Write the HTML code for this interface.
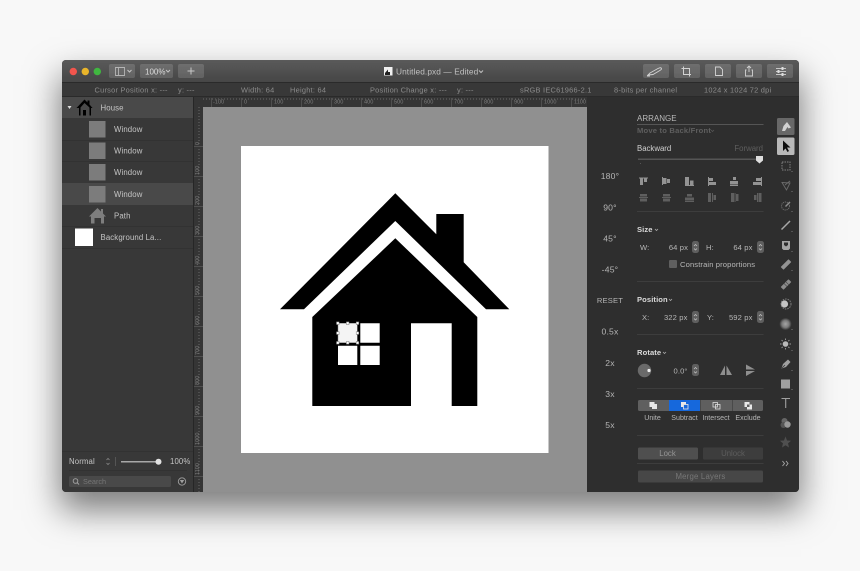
<!DOCTYPE html>
<html lang="en"><head><meta charset="utf-8"><title>Untitled.pxd</title>
<style>
html,body{margin:0;padding:0;width:860px;height:571px;overflow:hidden;background:#f8f8f8}
.shadow{position:absolute;left:68px;top:74px;width:725px;height:418px;box-shadow:0 10px 32px 8px rgba(0,0,0,.5)}
svg{position:absolute;left:0;top:0}
text{font-family:"Liberation Sans",sans-serif}
.s{font-size:7.4px;fill:#8c8c8c;letter-spacing:.25px}
.r{font-size:5.6px;fill:#7c7c7c}
.l{font-size:7.8px;fill:#c4c4c4;letter-spacing:.12px}
.g{font-size:8.6px;fill:#b4b4b4;text-anchor:middle;letter-spacing:.2px}
.b{font-size:7.6px;fill:#dadada;font-weight:bold;letter-spacing:.1px}
.p{font-size:7.6px;fill:#b6b6b6;letter-spacing:.12px}
.u{font-size:7.1px;fill:#b6b6b6;text-anchor:middle}
.e{text-anchor:end}.m{text-anchor:middle}
.ln{stroke:#3d3d3d;stroke-width:1}
.ic{fill:#939393}.id{fill:#5e5e5e}
</style></head><body>
<div class="shadow"></div>
<svg width="860" height="571" viewBox="0 0 860 571" xmlns="http://www.w3.org/2000/svg">
<defs>
<linearGradient id="tb" x1="0" y1="0" x2="0" y2="1"><stop offset="0" stop-color="#5a5a5a"/><stop offset="1" stop-color="#464646"/></linearGradient>
<linearGradient id="btn" x1="0" y1="0" x2="0" y2="1"><stop offset="0" stop-color="#6e6e6e"/><stop offset="1" stop-color="#626262"/></linearGradient>
<radialGradient id="soft"><stop offset="0" stop-color="#a5a5a5"/><stop offset=".6" stop-color="#7a7a7a"/><stop offset="1" stop-color="#333"/></radialGradient>
<pattern id="tickh" x="2" y="0" width="3" height="10" patternUnits="userSpaceOnUse"><rect x="0" y="8" width="1" height="2" fill="#505050"/></pattern>
<pattern id="tickv" x="0" y="2" width="10" height="3" patternUnits="userSpaceOnUse"><rect x="8" y="0" width="2" height="1" fill="#505050"/></pattern>
<filter id="bl" x="0" y="0" width="100%" height="100%"><feGaussianBlur stdDeviation="0.35"/></filter>
<clipPath id="win"><rect x="62" y="60" width="737" height="432" rx="4"/></clipPath>
</defs>
<g filter="url(#bl)">
<g clip-path="url(#win)">
<rect x="62" y="60" width="737" height="432" fill="#2f2f2f"/>
<!-- title bar -->
<rect x="62" y="60" width="737" height="22" fill="url(#tb)"/>
<rect x="62" y="82" width="737" height="15" fill="#383838"/>
<rect x="62" y="82" width="737" height="1" fill="#2a2a2a"/>
<rect x="62" y="96" width="737" height="1" fill="#2a2a2a"/>
<!-- sidebar -->
<rect x="62" y="97" width="131" height="395" fill="#383838"/>
<rect x="62" y="97" width="131" height="21" fill="#4a4a4a"/>
<rect x="62" y="183" width="131" height="22" fill="#4a4a4a"/>
<g stroke="#333" stroke-width="1">
<path d="M62 140.500H193M62 161.500H193M62 226.500H193M62 248.500H193M62 451.500H193M69 470.500H187"/>
</g>
<!-- rulers -->
<rect x="193" y="97" width="394" height="10" fill="#353535"/>
<rect x="193" y="97" width="10" height="395" fill="#353535"/>
<rect x="193" y="97" width="1" height="395" fill="#252525"/>
<rect x="203" y="97" width="384" height="10" fill="url(#tickh)"/>
<rect x="193" y="107" width="10" height="385" fill="url(#tickv)"/>
<path d="M211.500 98V107M241.500 98V107M271.500 98V107M301.500 98V107M331.500 98V107M361.500 98V107M391.500 98V107M421.500 98V107M451.500 98V107M481.500 98V107M511.500 98V107M541.500 98V107M571.500 98V107" stroke="#505050"/>
<path d="M194 146.500H203M194 176.500H203M194 206.500H203M194 236.500H203M194 266.500H203M194 296.500H203M194 326.500H203M194 356.500H203M194 386.500H203M194 416.500H203M194 446.500H203M194 476.500H203" stroke="#505050"/>
<text class="r" x="213" y="103.500">-100</text><text class="r" x="244" y="103.500">0</text><text class="r" x="274" y="103.500">100</text><text class="r" x="304" y="103.500">200</text><text class="r" x="334" y="103.500">300</text><text class="r" x="364" y="103.500">400</text><text class="r" x="394" y="103.500">500</text><text class="r" x="424" y="103.500">600</text><text class="r" x="454" y="103.500">700</text><text class="r" x="484" y="103.500">800</text><text class="r" x="514" y="103.500">900</text><text class="r" x="544" y="103.500">1000</text><text class="r" x="574" y="103.500">1100</text>
<text class="r" transform="translate(199,145) rotate(-90)">0</text><text class="r" transform="translate(199,175) rotate(-90)">100</text><text class="r" transform="translate(199,205) rotate(-90)">200</text><text class="r" transform="translate(199,235) rotate(-90)">300</text><text class="r" transform="translate(199,265) rotate(-90)">400</text><text class="r" transform="translate(199,295) rotate(-90)">500</text><text class="r" transform="translate(199,325) rotate(-90)">600</text><text class="r" transform="translate(199,355) rotate(-90)">700</text><text class="r" transform="translate(199,385) rotate(-90)">800</text><text class="r" transform="translate(199,415) rotate(-90)">900</text><text class="r" transform="translate(199,445) rotate(-90)">1000</text><text class="r" transform="translate(199,475) rotate(-90)">1100</text>
<!-- canvas -->
<rect x="203" y="107" width="384" height="385" fill="#909090"/>
<rect x="241" y="146" width="307.500" height="307" fill="#fff"/>
<path d="M395.300 193.300L436.300 234.300V214H463.700V262.300L509.300 309.300H486L395.300 221L304 309.300H280Z" fill="#000"/>
<path fill-rule="evenodd" d="M395.300 238.300L477.300 317V406H451.700V323.300H411V406H312.300V317Z M338 323.300V342.700H357.300V323.300Z M360.300 323.300V342.700H379.700V323.300Z M338 345.700V365H357.300V345.700Z M360.300 345.700V365H379.700V345.700Z" fill="#000"/>
<rect x="338" y="323.300" width="19.300" height="19.300" fill="#f4f4f4" stroke="#888" stroke-width=".5"/>
<g fill="#fff" stroke="#777" stroke-width=".5"><rect x="336.500" y="321.900" width="2.600" height="2.600"/><rect x="346.400" y="321.900" width="2.600" height="2.600"/><rect x="356.200" y="321.900" width="2.600" height="2.600"/><rect x="336.500" y="331.800" width="2.600" height="2.600"/><rect x="356.200" y="331.800" width="2.600" height="2.600"/><rect x="336.500" y="341.500" width="2.600" height="2.600"/><rect x="346.400" y="341.500" width="2.600" height="2.600"/><rect x="356.200" y="341.500" width="2.600" height="2.600"/></g>
<!-- right panel -->
<rect x="587" y="107" width="212" height="385" fill="#2f2f2f"/>
<rect x="587" y="97" width="212" height="10" fill="#2f2f2f"/>
</g>
<!-- traffic lights -->
<circle cx="73.300" cy="71.500" r="3.700" fill="#f2544d"/><circle cx="85.300" cy="71.500" r="3.700" fill="#e9b52c"/><circle cx="97.300" cy="71.500" r="3.700" fill="#3fb73f"/>
<!-- toolbar buttons -->
<g fill="url(#btn)">
<rect x="109" y="64" width="26" height="14" rx="2"/><rect x="140" y="64" width="33" height="14" rx="2"/><rect x="178" y="64" width="26" height="14" rx="2"/>
<rect x="643" y="64" width="26" height="14" rx="2"/><rect x="674" y="64" width="26" height="14" rx="2"/><rect x="705" y="64" width="26" height="14" rx="2"/><rect x="736" y="64" width="26" height="14" rx="2"/><rect x="767" y="64" width="26" height="14" rx="2"/>
</g>
<path d="M115.500 67.500H124.500V75.500H115.500ZM118.500 67.500V75.500" fill="none" stroke="#b5b5b5" stroke-width=".9"/>
<path d="M127.500 70L129.500 72L131.500 70" fill="none" stroke="#c5c5c5" stroke-width="1"/>
<text x="145" y="74.500" font-size="8" fill="#dedede">100%</text>
<path d="M166 70L168 72L170 70" fill="none" stroke="#c5c5c5" stroke-width="1"/>
<path d="M191 67.500V74.500M187.500 71H194.500" stroke="#c8c8c8" stroke-width="1"/>
<path d="M648 75L650 73L658 68.500Q661 67 661.500 68.500Q662 69.500 659 71L653 74.500Z" fill="none" stroke="#d2d2d2" stroke-width=".9"/><path d="M647 76H650" stroke="#d2d2d2"/>
<path d="M683.500 66.500V74.500H691M681.500 68.500H689.500V76.500" fill="none" stroke="#d2d2d2" stroke-width="1"/>
<path d="M715.500 67H720L722.500 69.500V75.500H715.500Z" fill="none" stroke="#d2d2d2" stroke-width=".9"/>
<path d="M746.500 70H745.500V76H752.500V70H751.500M749 72V66M747 68L749 66L751 68" fill="none" stroke="#d2d2d2" stroke-width=".9"/>
<path d="M776 68.500H786M776 71.500H786M776 74.500H786" stroke="#c8c8c8" stroke-width=".9"/><rect x="781.500" y="67" width="2" height="3" fill="#ddd"/><rect x="777.500" y="70" width="2" height="3" fill="#ddd"/><rect x="781.500" y="73" width="2" height="3" fill="#ddd"/>
<!-- title -->
<rect x="384" y="67" width="8.500" height="8.500" fill="#f1f1f1"/><path d="M385 73L388 69.500V72H390V75H385Z" fill="#222"/>
<text x="396" y="74.500" font-size="8.300" fill="#c0c0c0" letter-spacing=".1">Untitled.pxd — Edited</text>
<path d="M479 70.500L481 72.500L483 70.500" fill="none" stroke="#c0c0c0"/>
<!-- status -->
<text class="s" x="94.500" y="92.500">Cursor Position x: ---</text><text class="s" x="178" y="92.500">y: ---</text><text class="s" x="241" y="92.500">Width: 64</text><text class="s" x="290" y="92.500">Height: 64</text><text class="s" x="370" y="92.500">Position Change x: ---</text><text class="s" x="457" y="92.500">y: ---</text><text class="s" x="520" y="92.500">sRGB IEC61966-2.1</text><text class="s" x="614" y="92.500">8-bits per channel</text><text class="s" x="704" y="92.500">1024  x 1024 72 dpi</text>
<!-- layers -->
<path d="M67.500 106H71.500L69.500 109Z" fill="#ddd"/>
<path d="M84.500 99.500L87.500 102.500V100.500H89.500V104.500L92.500 108H91V115.500H79V108H76.500Z M84.500 103L80.500 107.500V115.500H83V110H86V115.500H89.500V107.500Z" fill="#000" fill-rule="evenodd"/>
<text class="l" x="100.500" y="110.500">House</text>
<rect x="89" y="121" width="16.500" height="16.500" fill="#7b7b7b"/><text class="l" x="114" y="132">Window</text>
<rect x="89" y="142.500" width="16.500" height="16.500" fill="#7b7b7b"/><text class="l" x="114" y="153.500">Window</text>
<rect x="89" y="164" width="16.500" height="16.500" fill="#7b7b7b"/><text class="l" x="114" y="175">Window</text>
<rect x="89" y="186" width="16.500" height="16.500" fill="#7b7b7b"/><text class="l" x="114" y="197">Window</text>
<path d="M97.500 208L101 211.500V209H103V213.500L106 216.500H104V223.500H101V218H94.500V223.500H91V216.500H89Z" fill="#7e7e7e"/>
<text class="l" x="114" y="218.500">Path</text>
<rect x="75" y="228.500" width="18" height="17.500" fill="#fff"/>
<text class="l" x="100.500" y="240">Background La...</text>
<!-- bottom of sidebar -->
<text class="l" x="69" y="464">Normal</text>
<path d="M106.500 460L108 458.500L109.500 460M106.500 463L108 464.500L109.500 463" fill="none" stroke="#8a8a8a" stroke-width=".8"/>
<path d="M115.500 457V466" stroke="#555"/>
<rect x="121" y="461" width="38" height="1.500" fill="#a8a8a8"/><circle cx="158.500" cy="461.700" r="3" fill="#e2e2e2"/>
<text class="l" x="170" y="464">100%</text>
<rect x="69" y="476" width="102" height="11" rx="1.500" fill="#484848"/>
<circle cx="75.500" cy="481" r="2.300" fill="none" stroke="#a5a5a5" stroke-width=".9"/><path d="M77.200 482.700L79 484.500" stroke="#a5a5a5"/>
<text x="83" y="484" font-size="7.300" fill="#777">Search</text>
<circle cx="182" cy="481.500" r="3.700" fill="none" stroke="#a0a0a0" stroke-width=".9"/><path d="M179.800 480H184.200L182 483.500Z" fill="#a0a0a0"/>
<!-- presets -->
<text class="g" x="610" y="179">180°</text><text class="g" x="610" y="210.500">90°</text><text class="g" x="610" y="241.500">45°</text><text class="g" x="610" y="272.500">-45°</text><text class="g" x="610" y="303" style="font-size:7.600px">RESET</text><text class="g" x="610" y="334.500">0.5x</text><text class="g" x="610" y="366">2x</text><text class="g" x="610" y="397">3x</text><text class="g" x="610" y="428">5x</text>
<!-- arrange -->
<text x="637" y="121" font-size="8" fill="#b8b8b8">ARRANGE</text>
<path d="M637 124.500H763.500" stroke="#555"/>
<text x="637" y="133" font-size="7.600" font-weight="bold" fill="#5e5e5e" letter-spacing=".2">Move to Back/Front</text>
<path d="M711 130L712.500 131.500L714 130" fill="none" stroke="#555" stroke-width=".8"/>
<text x="637" y="151" font-size="7.800" fill="#d0d0d0">Backward</text>
<text class="e" x="763" y="151" font-size="7.800" fill="#5e5e5e">Forward</text>
<rect x="638" y="158.500" width="122" height="1.500" fill="#555"/>
<path d="M756 156H763V160.500L759.500 163.500L756 160.500Z" fill="#dedede"/>
<rect x="640" y="163" width="1" height="1" fill="#555"/>
<!-- align icons row 1 -->
<g class="ic"><rect x="639" y="177.500" width="9" height="1"/><rect x="640" y="178" width="3" height="7"/><rect x="644" y="178" width="3" height="4"/>
<rect x="662" y="177" width="1" height="8"/><rect x="663" y="178" width="3.500" height="6"/><rect x="667" y="179" width="3" height="4"/>
<rect x="685" y="185" width="9" height="1"/><rect x="685" y="177" width="4" height="8"/><rect x="690" y="180.500" width="3.500" height="4.500"/>
<rect x="708" y="177" width="1" height="9"/><rect x="709" y="178" width="4" height="3"/><rect x="709" y="182" width="7" height="3"/>
<rect x="733" y="177" width="3" height="3"/><rect x="730" y="181" width="8" height="3.500"/><rect x="730" y="185" width="8" height="1"/>
<rect x="761" y="177" width="1" height="9"/><rect x="756" y="178" width="5" height="3"/><rect x="753" y="182" width="8" height="3"/></g>
<!-- align icons row 2 -->
<g class="id"><rect x="640" y="194" width="7" height="2.500"/><rect x="639" y="197" width="9" height="1"/><rect x="640" y="198.500" width="7" height="3"/>
<rect x="663" y="194" width="7" height="2.500"/><rect x="662" y="197" width="9" height="1"/><rect x="663" y="198.500" width="7" height="3"/>
<rect x="687" y="194" width="5" height="2.500"/><rect x="685" y="197.500" width="9" height="3"/><rect x="685" y="201" width="9" height="1"/>
<rect x="708" y="193" width="3" height="9"/><rect x="712" y="193" width="1" height="9"/><rect x="713.500" y="195" width="2.500" height="5"/>
<rect x="731" y="193" width="3" height="9"/><rect x="734.500" y="193" width="1" height="9"/><rect x="736" y="194" width="2.500" height="7"/>
<rect x="754" y="195" width="2.500" height="5"/><rect x="757" y="193" width="1" height="9"/><rect x="758.500" y="193" width="3" height="9"/></g>
<path class="ln" d="M637 211.500H763.500M637 281.500H763.500M637 334.500H763.500M637 388.500H763.500M637 435.500H763.500M637 463.500H763.500"/>
<!-- size -->
<text class="b" x="637" y="232">Size</text><path d="M655 229L656.500 230.500L658 229" fill="none" stroke="#aaa" stroke-width=".8"/>
<text class="p" x="640" y="250">W:</text><text class="p e" x="688" y="250">64 px</text><text class="p" x="706" y="250">H:</text><text class="p e" x="752.500" y="250">64 px</text>
<!-- steppers -->
<g fill="#5e5e5e"><rect x="692" y="241" width="7" height="12" rx="2.500"/><rect x="757" y="241" width="7" height="12" rx="2.500"/><rect x="692" y="311" width="7" height="12" rx="2.500"/><rect x="757" y="311" width="7" height="12" rx="2.500"/><rect x="692" y="364" width="7" height="12" rx="2.500"/></g>
<path d="M694 246L695.500 244.500L697 246M694 248.500L695.500 250L697 248.500M759 246L760.500 244.500L762 246M759 248.500L760.500 250L762 248.500M694 316L695.500 314.500L697 316M694 318.500L695.500 320L697 318.500M759 316L760.500 314.500L762 316M759 318.500L760.500 320L762 318.500M694 369L695.500 367.500L697 369M694 371.500L695.500 373L697 371.500" fill="none" stroke="#c8c8c8" stroke-width=".7"/>
<rect x="669" y="260" width="8" height="8" rx="1" fill="#5e5e5e"/>
<text class="p" x="680" y="267">Constrain proportions</text>
<!-- position -->
<text class="b" x="637" y="302">Position</text><path d="M669 299L670.500 300.500L672 299" fill="none" stroke="#aaa" stroke-width=".8"/>
<text class="p" x="642" y="320">X:</text><text class="p e" x="687.500" y="320">322 px</text><text class="p" x="707" y="320">Y:</text><text class="p e" x="752.500" y="320">592 px</text>
<!-- rotate -->
<text class="b" x="637" y="355">Rotate</text><path d="M663 352L664.500 353.500L666 352" fill="none" stroke="#aaa" stroke-width=".8"/>
<circle cx="644.500" cy="370.500" r="6.700" fill="#6a6a6a"/><circle cx="649" cy="370.500" r="1.600" fill="#eee"/>
<text class="p" x="673.500" y="373.500">0.0°</text>
<path d="M725 365.500V375H720ZM726.500 365.500V375H732Z" fill="#8f8f8f"/>
<path d="M746 364.500L755 369.500H746ZM746 371H755L746 376Z" fill="#8f8f8f"/>
<!-- boolean -->
<rect x="638" y="400" width="125" height="11" rx="1.500" fill="#5e5e5e"/>
<rect x="669" y="400" width="32" height="11" fill="#1667dc"/>
<path d="M700.500 400V411M732.500 400V411" stroke="#484848"/>
<rect x="649.500" y="402" width="5" height="5" fill="#e8e8e8"/><rect x="652" y="404" width="5" height="5" fill="#e8e8e8"/>
<rect x="681" y="402" width="5" height="5" fill="#e8e8e8"/><rect x="683.500" y="404.500" width="4.500" height="4.500" fill="#1667dc" stroke="#e8e8e8" stroke-width=".8"/>
<rect x="713" y="402.500" width="4.500" height="4.500" fill="none" stroke="#ddd" stroke-width=".8"/><rect x="715.500" y="404.500" width="4.500" height="4.500" fill="none" stroke="#ddd" stroke-width=".8"/>
<rect x="744.500" y="402" width="5" height="5" fill="#e8e8e8"/><rect x="747" y="404.500" width="5" height="5" fill="#e8e8e8"/><rect x="747" y="404.500" width="2.500" height="2.500" fill="#5e5e5e"/>
<text class="u" x="652.500" y="420">Unite</text><text class="u" x="684.500" y="420">Subtract</text><text class="u" x="716" y="420">Intersect</text><text class="u" x="748" y="420">Exclude</text>
<!-- buttons -->
<rect x="638" y="447.500" width="60" height="12" rx="1.500" fill="#505050"/><rect x="703" y="447.500" width="60" height="12" rx="1.500" fill="#3e3e3e"/><rect x="638" y="470.500" width="125" height="12" rx="1.500" fill="#464646"/>
<text class="m" x="667.500" y="456" font-size="7.800" fill="#959595">Lock</text><text class="m" x="733" y="456" font-size="7.800" fill="#5c5c5c">Unlock</text><text class="m" x="700.500" y="479" font-size="7.800" fill="#787878" letter-spacing=".2">Merge Layers</text>
<!-- tools -->
<rect x="777" y="118" width="17.500" height="17" rx="1.500" fill="#686868"/><rect x="777" y="137.500" width="17.500" height="17.500" rx="1.500" fill="#b9b9b9"/>
<path d="M782 131L783.500 126L787 122L791 127.500L788.500 128.500L787.500 127L785 131Z" fill="#d0d0d0"/>
<path d="M783 140.500V151L785.500 148.500L787.500 152L789 151L787 147.500H790.500Z" fill="#111"/>
<rect x="782" y="162" width="8" height="8" fill="none" stroke="#808080" stroke-width="1" stroke-dasharray="1.500 1"/>
<path d="M782 182.500L790 183L786.500 190ZM785 185L790 181" fill="none" stroke="#6c6c6c" stroke-width=".9"/>
<circle cx="785.500" cy="206" r="4" fill="none" stroke="#6c6c6c" stroke-dasharray="1.200 .8"/><path d="M785 206L789.500 201.500L790.500 202.500L786 207Z" fill="#8c8c8c"/>
<path d="M781.500 229.500L790 221" stroke="#a8a8a8" stroke-width="1.500"/>
<path d="M782 241H790V248.500L788.500 250H783.500L782 248.500Z" fill="#a5a5a5"/><path d="M784 242.500H788V245L786 246.500L784 245Z" fill="#2e2e2e"/>
<path d="M781.500 267L788.500 260L790.500 262L783.500 269Z" fill="#939393" stroke="#939393" stroke-width="1.200" stroke-linejoin="round"/>
<path d="M781.500 287L788.500 280L790.500 282L783.500 289Z" fill="#8c8c8c" stroke="#8c8c8c" stroke-width="1.200" stroke-linejoin="round"/><path d="M784 283.500L787 286.500M786 282L789 285" stroke="#444" stroke-width=".6"/>
<circle cx="784.500" cy="304" r="3.600" fill="#c4c4c4"/><circle cx="786" cy="304" r="5" fill="none" stroke="#7c7c7c" stroke-dasharray="1.500 1"/>
<circle cx="785.500" cy="324" r="6" fill="url(#soft)"/>
<circle cx="785.500" cy="344" r="2.800" fill="#bababa"/><path d="M785.500 338.500V340M785.500 348V349.500M780 344H781.500M789.500 344H791M781.600 340.100L782.700 341.200M788.300 346.800L789.400 347.900M781.600 347.900L782.700 346.800M788.300 341.200L789.400 340.100" stroke="#9c9c9c" stroke-width=".9"/>
<path d="M781.500 368.500L783 364L788 359.500L790.500 362L786 367Z" fill="#a0a0a0"/><path d="M782 368L785 365" stroke="#2e2e2e" stroke-width=".7"/>
<rect x="781" y="379.500" width="9" height="9" fill="#a0a0a0"/>
<path d="M781.500 398.500H790M785.700 398.500V408" stroke="#a0a0a0" stroke-width="1.100"/>
<circle cx="784.500" cy="421" r="3" fill="#666"/><circle cx="783.500" cy="425" r="3" fill="#545454"/><circle cx="787.500" cy="424.500" r="3.200" fill="#999"/>
<path d="M785.500 436.500L787 440.500L791 440.800L788 443.400L789 447.500L785.500 445.200L782 447.500L783 443.400L780 440.800L784 440.500Z" fill="#505050"/>
<path d="M782.500 461L784.500 463.500L782.500 466M786 461L788 463.500L786 466" fill="none" stroke="#a8a8a8" stroke-width=".9"/>
<g fill="#7a7a7a"><rect x="791.500" y="171" width="1" height="1"/><rect x="791.500" y="191" width="1" height="1"/><rect x="791.500" y="211" width="1" height="1"/><rect x="791.500" y="231" width="1" height="1"/><rect x="791.500" y="251" width="1" height="1"/><rect x="791.500" y="270" width="1" height="1"/><rect x="791.500" y="329" width="1" height="1"/><rect x="791.500" y="350" width="1" height="1"/><rect x="791.500" y="370" width="1" height="1"/><rect x="791.500" y="389" width="1" height="1"/></g>
</g>
</svg>
</body></html>
